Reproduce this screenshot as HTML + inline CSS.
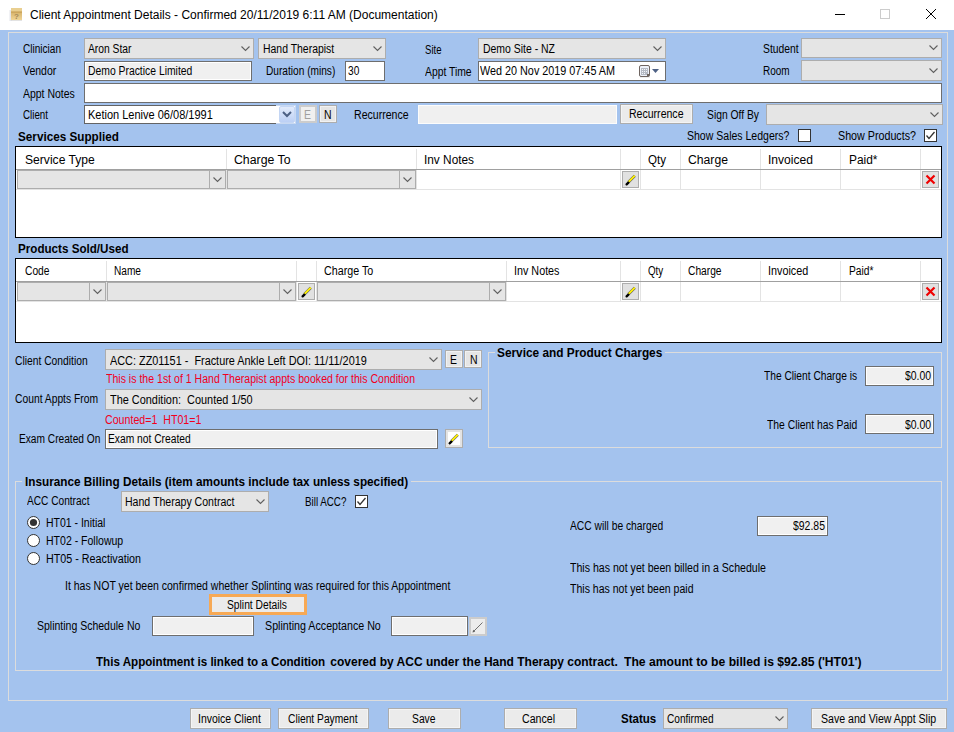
<!DOCTYPE html>
<html><head><meta charset="utf-8"><style>
html,body{margin:0;padding:0;width:954px;height:732px;overflow:hidden;background:#A4C3EE}
.a{position:absolute}
.t{white-space:pre;font-family:'Liberation Sans', sans-serif}
svg{overflow:visible}
</style></head><body>
<div class="a" style="left:0px;top:0px;width:954px;height:30px;background:#fff;"></div>
<div class="a" style="left:0px;top:30px;width:954px;height:702px;background:#A4C3EE;"></div>
<svg class="a" style="left:8px;top:6px" width="18" height="18"><defs><linearGradient id="gb" x1="0" y1="0" x2="0" y2="1"><stop offset="0" stop-color="#C9A155"/><stop offset="1" stop-color="#F0D597"/></linearGradient></defs><rect x="1.5" y="4" width="2" height="11" fill="#D8DCE4" opacity="0.7"/><rect x="3" y="2" width="11" height="12" fill="url(#gb)"/><rect x="3" y="2" width="11" height="4" fill="#E9CF90"/><rect x="3" y="5.5" width="11" height="1" fill="#C49A4E"/><text x="6" y="13" font-size="8" font-weight="bold" fill="#A48A58" font-family="Liberation Sans">?</text><rect x="3" y="14" width="11" height="1" fill="#D0D0D0" opacity="0.6"/></svg>
<div class="a t" style="top:9.00px;font-size:12px;line-height:13px;color:#000;left:30.00px;">Client Appointment Details - Confirmed 20/11/2019 6:11 AM (Documentation)</div>
<div class="a" style="left:835px;top:14px;width:10px;height:1px;background:#000;"></div>
<div class="a" style="left:880px;top:9px;width:10px;height:10px;border:1px solid #CCCCCC;box-sizing:border-box;"></div>
<svg class="a" style="left:926px;top:9px" width="10" height="10"><path d="M0 0 L10 10 M10 0 L0 10" stroke="#000" stroke-width="1"/></svg>
<div class="a" style="left:8px;top:32px;width:940px;height:669px;box-sizing:border-box;border:1px solid #DCDCDC"></div>
<div class="a t" style="top:43.00px;font-size:12px;line-height:13px;color:#000;left:23.00px;transform:scaleX(0.8379);transform-origin:0 0;">Clinician</div>
<div class="a" style="left:84px;top:38px;width:170px;height:21px;background:#E5E5E5;border:1px solid #ADADAD;box-sizing:border-box;"></div>
<svg class="a" style="left:241px;top:46px" width="9" height="5"><polyline points="0.5,0.5 4.5,4.5 8.5,0.5" fill="none" stroke="#606060" stroke-width="1.1"/></svg>
<div class="a t" style="top:43.00px;font-size:12px;line-height:13px;color:#000;left:88.00px;transform:scaleX(0.8582);transform-origin:0 0;">Aron Star</div>
<div class="a" style="left:258px;top:38px;width:128px;height:21px;background:#E5E5E5;border:1px solid #ADADAD;box-sizing:border-box;"></div>
<svg class="a" style="left:373px;top:46px" width="9" height="5"><polyline points="0.5,0.5 4.5,4.5 8.5,0.5" fill="none" stroke="#606060" stroke-width="1.1"/></svg>
<div class="a t" style="top:43.00px;font-size:12px;line-height:13px;color:#000;left:262.60px;transform:scaleX(0.8703);transform-origin:0 0;">Hand Therapist</div>
<div class="a t" style="top:44.00px;font-size:12px;line-height:13px;color:#000;left:424.50px;transform:scaleX(0.7980);transform-origin:0 0;">Site</div>
<div class="a" style="left:478px;top:38px;width:188px;height:21px;background:#E5E5E5;border:1px solid #ADADAD;box-sizing:border-box;"></div>
<svg class="a" style="left:653px;top:46px" width="9" height="5"><polyline points="0.5,0.5 4.5,4.5 8.5,0.5" fill="none" stroke="#606060" stroke-width="1.1"/></svg>
<div class="a t" style="top:43.00px;font-size:12px;line-height:13px;color:#000;left:482.70px;transform:scaleX(0.8700);transform-origin:0 0;">Demo Site - NZ</div>
<div class="a t" style="top:43.00px;font-size:12px;line-height:13px;color:#000;left:763.40px;transform:scaleX(0.8606);transform-origin:0 0;">Student</div>
<div class="a" style="left:801px;top:38px;width:141px;height:20px;background:#E5E5E5;border:1px solid #ADADAD;box-sizing:border-box;"></div>
<svg class="a" style="left:929px;top:45px" width="9" height="5"><polyline points="0.5,0.5 4.5,4.5 8.5,0.5" fill="none" stroke="#606060" stroke-width="1.1"/></svg>
<div class="a t" style="top:65.00px;font-size:12px;line-height:13px;color:#000;left:23.30px;transform:scaleX(0.8729);transform-origin:0 0;">Vendor</div>
<div class="a" style="left:84px;top:61px;width:168px;height:20px;box-sizing:border-box;border:1px solid #6E6E6E;background:#F0F0F0;box-shadow:inset 0 0 0 1px #fff"></div>
<div class="a t" style="top:65.00px;font-size:12px;line-height:13px;color:#000;left:87.70px;transform:scaleX(0.8641);transform-origin:0 0;">Demo Practice Limited</div>
<div class="a t" style="top:65.00px;font-size:12px;line-height:13px;color:#000;left:265.70px;transform:scaleX(0.8449);transform-origin:0 0;">Duration (mins)</div>
<div class="a" style="left:345px;top:61px;width:40px;height:20px;box-sizing:border-box;border:1px solid #6E6E6E;background:#fff;box-shadow:inset 0 0 0 1px #fff"></div>
<div class="a t" style="top:65.00px;font-size:12px;line-height:13px;color:#000;left:348.40px;transform:scaleX(0.8466);transform-origin:0 0;">30</div>
<div class="a t" style="top:66.00px;font-size:12px;line-height:13px;color:#000;left:424.50px;transform:scaleX(0.8628);transform-origin:0 0;">Appt Time</div>
<div class="a" style="left:478px;top:61px;width:188px;height:20px;box-sizing:border-box;border:1px solid #6E6E6E;background:#fff;box-shadow:inset 0 0 0 1px #fff"></div>
<div class="a t" style="top:65.00px;font-size:12px;line-height:13px;color:#000;left:480.40px;transform:scaleX(0.9008);transform-origin:0 0;">Wed 20 Nov 2019 07:45 AM</div>
<svg class="a" style="left:639px;top:65px" width="22" height="13"><rect x="1" y="11" width="10" height="1.5" fill="#E0E0E0"/><rect x="0.5" y="0.5" width="10" height="11" rx="1.5" fill="#EEF2FA" stroke="#6E6460"/><rect x="2" y="3" width="7" height="7" fill="#B5BAC4"/><g fill="#F4F6FA"><rect x="3" y="4" width="1" height="1"/><rect x="5" y="4" width="1" height="1"/><rect x="7" y="4" width="1" height="1"/><rect x="3" y="6" width="1" height="1"/><rect x="5" y="6" width="1" height="1"/><rect x="7" y="6" width="1" height="1"/><rect x="3" y="8" width="1" height="1"/><rect x="5" y="8" width="1" height="1"/></g><rect x="8" y="9" width="2" height="2" fill="#6E6460"/><polygon points="13,4 20,4 16.5,8" fill="#4D6185"/></svg>
<div class="a t" style="top:65.00px;font-size:12px;line-height:13px;color:#000;left:763.40px;transform:scaleX(0.8310);transform-origin:0 0;">Room</div>
<div class="a" style="left:801px;top:60px;width:141px;height:21px;background:#E5E5E5;border:1px solid #ADADAD;box-sizing:border-box;"></div>
<svg class="a" style="left:929px;top:68px" width="9" height="5"><polyline points="0.5,0.5 4.5,4.5 8.5,0.5" fill="none" stroke="#606060" stroke-width="1.1"/></svg>
<div class="a t" style="top:88.00px;font-size:12px;line-height:13px;color:#000;left:23.30px;transform:scaleX(0.8709);transform-origin:0 0;">Appt Notes</div>
<div class="a" style="left:84px;top:83px;width:858px;height:20px;box-sizing:border-box;border:1px solid #6E6E6E;background:#fff;box-shadow:inset 0 0 0 1px #fff"></div>
<div class="a t" style="top:109.00px;font-size:12px;line-height:13px;color:#000;left:23.00px;transform:scaleX(0.8149);transform-origin:0 0;">Client</div>
<div class="a" style="left:84px;top:105px;width:212px;height:19px;box-sizing:border-box;border:1px solid #C9D9F1;background:#fff"></div>
<div class="a" style="left:84px;top:105px;width:192px;height:1px;background:#646464;"></div>
<div class="a" style="left:84px;top:123px;width:192px;height:1px;background:#646464;"></div>
<div class="a" style="left:84px;top:105px;width:1px;height:19px;background:#646464;"></div>
<div class="a" style="left:279px;top:106px;width:16px;height:17px;box-sizing:border-box;border:1px solid #C4D6F4;border-radius:2px;background:linear-gradient(#E2EBFB,#BCD0F5)"></div>
<svg class="a" style="left:282px;top:111px" width="10" height="7"><polyline points="1,1 5,5 9,1" fill="none" stroke="#4D6185" stroke-width="2"/></svg>
<div class="a t" style="top:109.00px;font-size:12px;line-height:13px;color:#000;left:87.70px;transform:scaleX(0.9169);transform-origin:0 0;">Ketion Lenive 06/08/1991</div>
<div class="a" style="left:299px;top:105px;width:18px;height:18px;box-sizing:border-box;border:2px solid #CCCCCC;background:#F0F0F0"></div>
<div class="a t" style="top:109.00px;font-size:12px;line-height:13px;color:#A0A0A0;left:304.00px;transform:scaleX(0.8700);transform-origin:0 0;">E</div>
<div class="a" style="left:319px;top:105px;width:18px;height:18px;box-sizing:border-box;border:1px solid #ADADAD;background:#E5E5E5;box-shadow:inset 0 0 0 1px #F2F2F2"></div>
<div class="a t" style="top:109.00px;font-size:12px;line-height:13px;color:#000;left:324.00px;transform:scaleX(0.8700);transform-origin:0 0;">N</div>
<div class="a t" style="top:109.00px;font-size:12px;line-height:13px;color:#000;left:354.40px;transform:scaleX(0.8803);transform-origin:0 0;">Recurrence</div>
<div class="a" style="left:418px;top:105px;width:199px;height:19px;box-sizing:border-box;border:1px solid #FCFCFC;background:#F0F0F0"></div>
<div class="a" style="left:620px;top:104px;width:73px;height:20px;box-sizing:border-box;border:1px solid #ADADAD;background:#EBEBEB;box-shadow:inset 0 0 0 1px #F4F4F4"></div>
<div class="a t" style="top:108.00px;font-size:12px;line-height:13px;color:#000;left:628.50px;transform:scaleX(0.8786);transform-origin:0 0;">Recurrence</div>
<div class="a t" style="top:109.00px;font-size:12px;line-height:13px;color:#000;left:707.00px;transform:scaleX(0.8599);transform-origin:0 0;">Sign Off By</div>
<div class="a" style="left:766px;top:104px;width:177px;height:21px;background:#E5E5E5;border:1px solid #ADADAD;box-sizing:border-box;"></div>
<svg class="a" style="left:930px;top:112px" width="9" height="5"><polyline points="0.5,0.5 4.5,4.5 8.5,0.5" fill="none" stroke="#606060" stroke-width="1.1"/></svg>
<div class="a t" style="top:131.00px;font-size:12px;line-height:13px;color:#000;font-weight:bold;left:17.50px;transform:scaleX(0.9760);transform-origin:0 0;">Services Supplied</div>
<div class="a t" style="top:130.00px;font-size:12px;line-height:13px;color:#000;left:687.20px;transform:scaleX(0.8771);transform-origin:0 0;">Show Sales Ledgers?</div>
<div class="a" style="left:798px;top:129px;width:13px;height:13px;background:#fff;border:1px solid #333;box-sizing:border-box;"></div>
<div class="a t" style="top:130.00px;font-size:12px;line-height:13px;color:#000;left:838.00px;transform:scaleX(0.8926);transform-origin:0 0;">Show Products?</div>
<div class="a" style="left:924px;top:129px;width:13px;height:13px;background:#fff;border:1px solid #333;box-sizing:border-box;"></div>
<svg class="a" style="left:924px;top:129px" width="13" height="13"><polyline points="2.5,6.5 5,9.5 10.5,3" fill="none" stroke="#333" stroke-width="1.3"/></svg>
<div class="a" style="left:15px;top:146px;width:927px;height:92px;box-sizing:border-box;border:1px solid #000;background:#fff"></div>
<div class="a" style="left:16px;top:169px;width:925px;height:1px;background:#A0A0A0;"></div>
<div class="a" style="left:226px;top:149px;width:1px;height:20px;background:#E3E3E3;"></div>
<div class="a" style="left:416px;top:149px;width:1px;height:20px;background:#E3E3E3;"></div>
<div class="a" style="left:620px;top:149px;width:1px;height:20px;background:#E3E3E3;"></div>
<div class="a" style="left:640px;top:149px;width:1px;height:20px;background:#E3E3E3;"></div>
<div class="a" style="left:680px;top:149px;width:1px;height:20px;background:#E3E3E3;"></div>
<div class="a" style="left:760px;top:149px;width:1px;height:20px;background:#E3E3E3;"></div>
<div class="a" style="left:840px;top:149px;width:1px;height:20px;background:#E3E3E3;"></div>
<div class="a" style="left:920px;top:149px;width:1px;height:20px;background:#E3E3E3;"></div>
<div class="a" style="left:16px;top:189px;width:925px;height:1px;background:#E3E3E3;"></div>
<div class="a" style="left:226px;top:170px;width:1px;height:19px;background:#E3E3E3;"></div>
<div class="a" style="left:416px;top:170px;width:1px;height:19px;background:#E3E3E3;"></div>
<div class="a" style="left:620px;top:170px;width:1px;height:19px;background:#E3E3E3;"></div>
<div class="a" style="left:640px;top:170px;width:1px;height:19px;background:#E3E3E3;"></div>
<div class="a" style="left:680px;top:170px;width:1px;height:19px;background:#E3E3E3;"></div>
<div class="a" style="left:760px;top:170px;width:1px;height:19px;background:#E3E3E3;"></div>
<div class="a" style="left:840px;top:170px;width:1px;height:19px;background:#E3E3E3;"></div>
<div class="a" style="left:920px;top:170px;width:1px;height:19px;background:#E3E3E3;"></div>
<div class="a t" style="top:154.00px;font-size:12px;line-height:13px;color:#000;left:25.00px;transform:scaleX(1.0092);transform-origin:0 0;">Service Type</div>
<div class="a t" style="top:154.00px;font-size:12px;line-height:13px;color:#000;left:234.00px;transform:scaleX(1.0241);transform-origin:0 0;">Charge To</div>
<div class="a t" style="top:154.00px;font-size:12px;line-height:13px;color:#000;left:424.00px;transform:scaleX(0.9864);transform-origin:0 0;">Inv Notes</div>
<div class="a t" style="top:154.00px;font-size:12px;line-height:13px;color:#000;left:648.00px;transform:scaleX(0.9642);transform-origin:0 0;">Qty</div>
<div class="a t" style="top:154.00px;font-size:12px;line-height:13px;color:#000;left:688.00px;transform:scaleX(1.0163);transform-origin:0 0;">Charge</div>
<div class="a t" style="top:154.00px;font-size:12px;line-height:13px;color:#000;left:768.00px;transform:scaleX(1.0068);transform-origin:0 0;">Invoiced</div>
<div class="a t" style="top:154.00px;font-size:12px;line-height:13px;color:#000;left:848.50px;transform:scaleX(0.9935);transform-origin:0 0;">Paid*</div>
<div class="a" style="left:17px;top:170px;width:209px;height:19px;background:#E5E5E5;border:1px solid #ADADAD;box-sizing:border-box;"></div>
<svg class="a" style="left:213px;top:177px" width="9" height="5"><polyline points="0.5,0.5 4.5,4.5 8.5,0.5" fill="none" stroke="#606060" stroke-width="1.1"/></svg>
<div class="a" style="left:209px;top:170px;width:1px;height:19px;background:#ADADAD;"></div>
<div class="a" style="left:227px;top:170px;width:189px;height:19px;background:#E5E5E5;border:1px solid #ADADAD;box-sizing:border-box;"></div>
<svg class="a" style="left:403px;top:177px" width="9" height="5"><polyline points="0.5,0.5 4.5,4.5 8.5,0.5" fill="none" stroke="#606060" stroke-width="1.1"/></svg>
<div class="a" style="left:399px;top:170px;width:1px;height:19px;background:#ADADAD;"></div>
<div class="a" style="left:622px;top:171px;width:17px;height:17px;background:#E1E1E1;border:1px solid #ADADAD;box-sizing:border-box;"></div>
<svg class="a" style="left:622px;top:171px" width="17" height="17"><line x1="6.3" y1="11.2" x2="12.8" y2="4.7" stroke="#303048" stroke-width="2.8" stroke-opacity="0.75"/><line x1="6.3" y1="11.2" x2="12.8" y2="4.7" stroke="#FFF200" stroke-width="1.9"/><line x1="4.6" y1="13.4" x2="6.4" y2="11.6" stroke="#000" stroke-width="2.3" stroke-linecap="round"/></svg>
<div class="a" style="left:922px;top:171px;width:17px;height:17px;background:#E1E1E1;border:1px solid #ADADAD;box-sizing:border-box;"></div>
<svg class="a" style="left:922px;top:171px" width="17" height="17"><path d="M4.5 4.5 L12.5 12.5 M12.5 4.5 L4.5 12.5" stroke="#F00000" stroke-width="2.2"/></svg>
<div class="a t" style="top:243.00px;font-size:12px;line-height:13px;color:#000;font-weight:bold;left:17.50px;transform:scaleX(0.9691);transform-origin:0 0;">Products Sold/Used</div>
<div class="a" style="left:15px;top:258px;width:927px;height:85px;box-sizing:border-box;border:1px solid #000;background:#fff"></div>
<div class="a" style="left:16px;top:281px;width:925px;height:1px;background:#A0A0A0;"></div>
<div class="a" style="left:106px;top:261px;width:1px;height:20px;background:#E3E3E3;"></div>
<div class="a" style="left:296px;top:261px;width:1px;height:20px;background:#E3E3E3;"></div>
<div class="a" style="left:316px;top:261px;width:1px;height:20px;background:#E3E3E3;"></div>
<div class="a" style="left:506px;top:261px;width:1px;height:20px;background:#E3E3E3;"></div>
<div class="a" style="left:620px;top:261px;width:1px;height:20px;background:#E3E3E3;"></div>
<div class="a" style="left:640px;top:261px;width:1px;height:20px;background:#E3E3E3;"></div>
<div class="a" style="left:680px;top:261px;width:1px;height:20px;background:#E3E3E3;"></div>
<div class="a" style="left:760px;top:261px;width:1px;height:20px;background:#E3E3E3;"></div>
<div class="a" style="left:840px;top:261px;width:1px;height:20px;background:#E3E3E3;"></div>
<div class="a" style="left:920px;top:261px;width:1px;height:20px;background:#E3E3E3;"></div>
<div class="a" style="left:16px;top:301px;width:925px;height:1px;background:#E3E3E3;"></div>
<div class="a" style="left:106px;top:282px;width:1px;height:19px;background:#E3E3E3;"></div>
<div class="a" style="left:296px;top:282px;width:1px;height:19px;background:#E3E3E3;"></div>
<div class="a" style="left:316px;top:282px;width:1px;height:19px;background:#E3E3E3;"></div>
<div class="a" style="left:506px;top:282px;width:1px;height:19px;background:#E3E3E3;"></div>
<div class="a" style="left:620px;top:282px;width:1px;height:19px;background:#E3E3E3;"></div>
<div class="a" style="left:640px;top:282px;width:1px;height:19px;background:#E3E3E3;"></div>
<div class="a" style="left:680px;top:282px;width:1px;height:19px;background:#E3E3E3;"></div>
<div class="a" style="left:760px;top:282px;width:1px;height:19px;background:#E3E3E3;"></div>
<div class="a" style="left:840px;top:282px;width:1px;height:19px;background:#E3E3E3;"></div>
<div class="a" style="left:920px;top:282px;width:1px;height:19px;background:#E3E3E3;"></div>
<div class="a t" style="top:265.00px;font-size:12px;line-height:13px;color:#000;left:24.50px;transform:scaleX(0.8540);transform-origin:0 0;">Code</div>
<div class="a t" style="top:265.00px;font-size:12px;line-height:13px;color:#000;left:114.00px;transform:scaleX(0.8435);transform-origin:0 0;">Name</div>
<div class="a t" style="top:265.00px;font-size:12px;line-height:13px;color:#000;left:323.60px;transform:scaleX(0.8923);transform-origin:0 0;">Charge To</div>
<div class="a t" style="top:265.00px;font-size:12px;line-height:13px;color:#000;left:514.00px;transform:scaleX(0.8976);transform-origin:0 0;">Inv Notes</div>
<div class="a t" style="top:265.00px;font-size:12px;line-height:13px;color:#000;left:648.00px;transform:scaleX(0.8142);transform-origin:0 0;">Qty</div>
<div class="a t" style="top:265.00px;font-size:12px;line-height:13px;color:#000;left:687.50px;transform:scaleX(0.8512);transform-origin:0 0;">Charge</div>
<div class="a t" style="top:265.00px;font-size:12px;line-height:13px;color:#000;left:768.00px;transform:scaleX(0.8994);transform-origin:0 0;">Invoiced</div>
<div class="a t" style="top:265.00px;font-size:12px;line-height:13px;color:#000;left:848.50px;transform:scaleX(0.8540);transform-origin:0 0;">Paid*</div>
<div class="a" style="left:17px;top:282px;width:89px;height:19px;background:#E5E5E5;border:1px solid #ADADAD;box-sizing:border-box;"></div>
<svg class="a" style="left:93px;top:289px" width="9" height="5"><polyline points="0.5,0.5 4.5,4.5 8.5,0.5" fill="none" stroke="#606060" stroke-width="1.1"/></svg>
<div class="a" style="left:89px;top:282px;width:1px;height:19px;background:#ADADAD;"></div>
<div class="a" style="left:107px;top:282px;width:189px;height:19px;background:#E5E5E5;border:1px solid #ADADAD;box-sizing:border-box;"></div>
<svg class="a" style="left:283px;top:289px" width="9" height="5"><polyline points="0.5,0.5 4.5,4.5 8.5,0.5" fill="none" stroke="#606060" stroke-width="1.1"/></svg>
<div class="a" style="left:279px;top:282px;width:1px;height:19px;background:#ADADAD;"></div>
<div class="a" style="left:298px;top:283px;width:17px;height:17px;background:#E1E1E1;border:1px solid #ADADAD;box-sizing:border-box;"></div>
<svg class="a" style="left:298px;top:283px" width="17" height="17"><line x1="6.3" y1="11.2" x2="12.8" y2="4.7" stroke="#303048" stroke-width="2.8" stroke-opacity="0.75"/><line x1="6.3" y1="11.2" x2="12.8" y2="4.7" stroke="#FFF200" stroke-width="1.9"/><line x1="4.6" y1="13.4" x2="6.4" y2="11.6" stroke="#000" stroke-width="2.3" stroke-linecap="round"/></svg>
<div class="a" style="left:317px;top:282px;width:189px;height:19px;background:#E5E5E5;border:1px solid #ADADAD;box-sizing:border-box;"></div>
<svg class="a" style="left:493px;top:289px" width="9" height="5"><polyline points="0.5,0.5 4.5,4.5 8.5,0.5" fill="none" stroke="#606060" stroke-width="1.1"/></svg>
<div class="a" style="left:489px;top:282px;width:1px;height:19px;background:#ADADAD;"></div>
<div class="a" style="left:622px;top:283px;width:17px;height:17px;background:#E1E1E1;border:1px solid #ADADAD;box-sizing:border-box;"></div>
<svg class="a" style="left:622px;top:283px" width="17" height="17"><line x1="6.3" y1="11.2" x2="12.8" y2="4.7" stroke="#303048" stroke-width="2.8" stroke-opacity="0.75"/><line x1="6.3" y1="11.2" x2="12.8" y2="4.7" stroke="#FFF200" stroke-width="1.9"/><line x1="4.6" y1="13.4" x2="6.4" y2="11.6" stroke="#000" stroke-width="2.3" stroke-linecap="round"/></svg>
<div class="a" style="left:922px;top:283px;width:17px;height:17px;background:#E1E1E1;border:1px solid #ADADAD;box-sizing:border-box;"></div>
<svg class="a" style="left:922px;top:283px" width="17" height="17"><path d="M4.5 4.5 L12.5 12.5 M12.5 4.5 L4.5 12.5" stroke="#F00000" stroke-width="2.2"/></svg>
<div class="a t" style="top:355.00px;font-size:12px;line-height:13px;color:#000;left:15.40px;transform:scaleX(0.8570);transform-origin:0 0;">Client Condition</div>
<div class="a" style="left:105px;top:349px;width:337px;height:21px;background:#E5E5E5;border:1px solid #ADADAD;box-sizing:border-box;"></div>
<svg class="a" style="left:429px;top:357px" width="9" height="5"><polyline points="0.5,0.5 4.5,4.5 8.5,0.5" fill="none" stroke="#606060" stroke-width="1.1"/></svg>
<div class="a t" style="top:355.00px;font-size:12px;line-height:13px;color:#000;left:109.60px;transform:scaleX(0.9059);transform-origin:0 0;">ACC: ZZ01151 -  Fracture Ankle Left DOI: 11/11/2019</div>
<div class="a" style="left:445px;top:350px;width:18px;height:18px;box-sizing:border-box;border:1px solid #ADADAD;background:#E5E5E5;box-shadow:inset 0 0 0 1px #F2F2F2"></div>
<div class="a t" style="top:354.00px;font-size:12px;line-height:13px;color:#000;left:450.00px;transform:scaleX(0.8700);transform-origin:0 0;">E</div>
<div class="a" style="left:464px;top:350px;width:18px;height:18px;box-sizing:border-box;border:1px solid #ADADAD;background:#E5E5E5;box-shadow:inset 0 0 0 1px #F2F2F2"></div>
<div class="a t" style="top:354.00px;font-size:12px;line-height:13px;color:#000;left:469.50px;transform:scaleX(0.8700);transform-origin:0 0;">N</div>
<div class="a t" style="top:373.00px;font-size:12px;line-height:13px;color:#F2001E;left:105.80px;transform:scaleX(0.8796);transform-origin:0 0;">This is the 1st of 1 Hand Therapist appts booked for this Condition</div>
<div class="a t" style="top:393.00px;font-size:12px;line-height:13px;color:#000;left:15.40px;transform:scaleX(0.8586);transform-origin:0 0;">Count Appts From</div>
<div class="a" style="left:105px;top:389px;width:377px;height:21px;background:#E5E5E5;border:1px solid #ADADAD;box-sizing:border-box;"></div>
<svg class="a" style="left:469px;top:397px" width="9" height="5"><polyline points="0.5,0.5 4.5,4.5 8.5,0.5" fill="none" stroke="#606060" stroke-width="1.1"/></svg>
<div class="a t" style="top:394.00px;font-size:12px;line-height:13px;color:#000;left:110.40px;transform:scaleX(0.9096);transform-origin:0 0;">The Condition:  Counted 1/50</div>
<div class="a t" style="top:414.00px;font-size:12px;line-height:13px;color:#F2001E;left:104.60px;transform:scaleX(0.8865);transform-origin:0 0;">Counted=1  HT01=1</div>
<div class="a t" style="top:433.00px;font-size:12px;line-height:13px;color:#000;left:18.60px;transform:scaleX(0.8476);transform-origin:0 0;">Exam Created On</div>
<div class="a" style="left:105px;top:429px;width:333px;height:20px;box-sizing:border-box;border:1px solid #6E6E6E;background:#F0F0F0;box-shadow:inset 0 0 0 1px #fff"></div>
<div class="a t" style="top:433.00px;font-size:12px;line-height:13px;color:#000;left:107.80px;transform:scaleX(0.8551);transform-origin:0 0;">Exam not Created</div>
<div class="a" style="left:445px;top:429px;width:18px;height:19px;box-sizing:border-box;border:1px solid #ADADAD;background:#fff;box-shadow:inset 0 0 0 2px #E3E3E3"></div>
<svg class="a" style="left:445px;top:430px" width="17" height="17"><line x1="6.3" y1="11.2" x2="12.8" y2="4.7" stroke="#303048" stroke-width="2.8" stroke-opacity="0.75"/><line x1="6.3" y1="11.2" x2="12.8" y2="4.7" stroke="#FFF200" stroke-width="1.9"/><line x1="4.6" y1="13.4" x2="6.4" y2="11.6" stroke="#000" stroke-width="2.3" stroke-linecap="round"/></svg>
<div class="a" style="left:488px;top:352px;width:454px;height:96px;box-sizing:border-box;border:1px solid #DCDCDC;border-top:none"></div>
<div class="a" style="left:488px;top:352px;width:7px;height:1px;background:#DCDCDC;"></div>
<div class="a" style="left:665px;top:352px;width:277px;height:1px;background:#DCDCDC;"></div>
<div class="a t" style="top:347.00px;font-size:12px;line-height:13px;color:#000;font-weight:bold;left:497.30px;transform:scaleX(0.9875);transform-origin:0 0;">Service and Product Charges</div>
<div class="a t" style="top:370.00px;font-size:12px;line-height:13px;color:#000;left:763.90px;transform:scaleX(0.8511);transform-origin:0 0;">The Client Charge is</div>
<div class="a" style="left:865px;top:366px;width:69px;height:20px;box-sizing:border-box;border:1px solid #6E6E6E;background:#F0F0F0;box-shadow:inset 0 0 0 1px #fff"></div>
<div class="a t" style="top:370.00px;font-size:12px;line-height:13px;color:#000;left:904.57px;transform:scaleX(0.8700);transform-origin:0 0;">$0.00</div>
<div class="a t" style="top:419.00px;font-size:12px;line-height:13px;color:#000;left:766.70px;transform:scaleX(0.8623);transform-origin:0 0;">The Client has Paid</div>
<div class="a" style="left:865px;top:414px;width:69px;height:20px;box-sizing:border-box;border:1px solid #6E6E6E;background:#F0F0F0;box-shadow:inset 0 0 0 1px #fff"></div>
<div class="a t" style="top:419.00px;font-size:12px;line-height:13px;color:#000;left:904.57px;transform:scaleX(0.8700);transform-origin:0 0;">$0.00</div>
<div class="a" style="left:15px;top:481px;width:927px;height:190px;box-sizing:border-box;border:1px solid #DCDCDC;border-top:none"></div>
<div class="a" style="left:15px;top:481px;width:7px;height:1px;background:#DCDCDC;"></div>
<div class="a" style="left:411px;top:481px;width:531px;height:1px;background:#DCDCDC;"></div>
<div class="a t" style="top:476.00px;font-size:12px;line-height:13px;color:#000;font-weight:bold;left:25.10px;transform:scaleX(0.9790);transform-origin:0 0;">Insurance Billing Details (item amounts include tax unless specified)</div>
<div class="a t" style="top:495.00px;font-size:12px;line-height:13px;color:#000;left:27.20px;transform:scaleX(0.8443);transform-origin:0 0;">ACC Contract</div>
<div class="a" style="left:121px;top:491px;width:148px;height:21px;background:#E5E5E5;border:1px solid #ADADAD;box-sizing:border-box;"></div>
<svg class="a" style="left:256px;top:499px" width="9" height="5"><polyline points="0.5,0.5 4.5,4.5 8.5,0.5" fill="none" stroke="#606060" stroke-width="1.1"/></svg>
<div class="a t" style="top:496.00px;font-size:12px;line-height:13px;color:#000;left:125.30px;transform:scaleX(0.8795);transform-origin:0 0;">Hand Therapy Contract</div>
<div class="a t" style="top:496.00px;font-size:12px;line-height:13px;color:#000;left:304.50px;transform:scaleX(0.8160);transform-origin:0 0;">Bill ACC?</div>
<div class="a" style="left:355px;top:495px;width:13px;height:13px;background:#fff;border:1px solid #333;box-sizing:border-box;"></div>
<svg class="a" style="left:355px;top:495px" width="13" height="13"><polyline points="2.5,6.5 5,9.5 10.5,3" fill="none" stroke="#333" stroke-width="1.3"/></svg>
<svg class="a" style="left:27px;top:516px" width="14" height="14"><circle cx="6.5" cy="6.5" r="6" fill="#fff" stroke="#333" stroke-width="1"/><circle cx="6.5" cy="6.5" r="3.6" fill="#333"/></svg>
<div class="a t" style="top:517.00px;font-size:12px;line-height:13px;color:#000;left:46.00px;transform:scaleX(0.8733);transform-origin:0 0;">HT01 - Initial</div>
<svg class="a" style="left:27px;top:534px" width="14" height="14"><circle cx="6.5" cy="6.5" r="6" fill="#fff" stroke="#333" stroke-width="1"/></svg>
<div class="a t" style="top:535.00px;font-size:12px;line-height:13px;color:#000;left:46.00px;transform:scaleX(0.8770);transform-origin:0 0;">HT02 - Followup</div>
<svg class="a" style="left:27px;top:552px" width="14" height="14"><circle cx="6.5" cy="6.5" r="6" fill="#fff" stroke="#333" stroke-width="1"/></svg>
<div class="a t" style="top:553.00px;font-size:12px;line-height:13px;color:#000;left:46.00px;transform:scaleX(0.8959);transform-origin:0 0;">HT05 - Reactivation</div>
<div class="a t" style="top:580.00px;font-size:12px;line-height:13px;color:#000;left:64.60px;transform:scaleX(0.8757);transform-origin:0 0;">It has NOT yet been confirmed whether Splinting was required for this Appointment</div>
<div class="a" style="left:209px;top:594px;width:98px;height:21px;box-sizing:border-box;border:3px solid #F7A955;background:#EBEBEB"></div>
<div class="a t" style="top:599.00px;font-size:12px;line-height:13px;color:#000;left:227.20px;transform:scaleX(0.8568);transform-origin:0 0;">Splint Details</div>
<div class="a t" style="top:620.00px;font-size:12px;line-height:13px;color:#000;left:37.40px;transform:scaleX(0.8748);transform-origin:0 0;">Splinting Schedule No</div>
<div class="a" style="left:152px;top:616px;width:102px;height:20px;box-sizing:border-box;border:1px solid #6E6E6E;background:#F0F0F0;box-shadow:inset 0 0 0 1px #fff"></div>
<div class="a t" style="top:620.00px;font-size:12px;line-height:13px;color:#000;left:265.30px;transform:scaleX(0.8903);transform-origin:0 0;">Splinting Acceptance No</div>
<div class="a" style="left:391px;top:616px;width:77px;height:20px;box-sizing:border-box;border:1px solid #6E6E6E;background:#F0F0F0;box-shadow:inset 0 0 0 1px #fff"></div>
<div class="a" style="left:469px;top:617px;width:18px;height:19px;box-sizing:border-box;border:2px solid #CCCCCC;background:#EDEDED"></div>
<svg class="a" style="left:469px;top:617px" width="18" height="19"><line x1="4.5" y1="14.5" x2="13.5" y2="5.5" stroke="#707070" stroke-width="1"/><path d="M3.5 15.5 L4.2 12.8 L6.2 14.8 Z" fill="#606060"/></svg>
<div class="a t" style="top:520.40px;font-size:12px;line-height:13px;color:#000;left:569.50px;transform:scaleX(0.8564);transform-origin:0 0;">ACC will be charged</div>
<div class="a" style="left:757px;top:516px;width:71px;height:20px;box-sizing:border-box;border:1px solid #6E6E6E;background:#F0F0F0;box-shadow:inset 0 0 0 1px #fff"></div>
<div class="a t" style="top:520.40px;font-size:12px;line-height:13px;color:#000;left:792.57px;transform:scaleX(0.8700);transform-origin:0 0;">$92.85</div>
<div class="a t" style="top:562.00px;font-size:12px;line-height:13px;color:#000;left:569.50px;transform:scaleX(0.8819);transform-origin:0 0;">This has not yet been billed in a Schedule</div>
<div class="a t" style="top:583.30px;font-size:12px;line-height:13px;color:#000;left:569.50px;transform:scaleX(0.8774);transform-origin:0 0;">This has not yet been paid</div>
<div class="a t" style="top:656.00px;font-size:12px;line-height:13px;color:#000;font-weight:bold;left:95.60px;transform:scaleX(0.9675);transform-origin:0 0;">This Appointment is linked to a Condition</div>
<div class="a t" style="top:656.00px;font-size:12px;line-height:13px;color:#000;font-weight:bold;left:330.30px;">covered by ACC under the Hand Therapy contract.</div>
<div class="a t" style="top:656.00px;font-size:12px;line-height:13px;color:#000;font-weight:bold;left:623.50px;transform:scaleX(1.0131);transform-origin:0 0;">The amount to be billed is $92.85 ('HT01')</div>
<div class="a" style="left:190px;top:708px;width:81px;height:21px;box-sizing:border-box;border:1px solid #ADADAD;background:#EBEBEB;box-shadow:inset 0 0 0 1px #F4F4F4"></div>
<div class="a t" style="top:713.00px;font-size:12px;line-height:13px;color:#000;left:198.20px;transform:scaleX(0.8718);transform-origin:0 0;">Invoice Client</div>
<div class="a" style="left:278px;top:708px;width:91px;height:21px;box-sizing:border-box;border:1px solid #ADADAD;background:#EBEBEB;box-shadow:inset 0 0 0 1px #F4F4F4"></div>
<div class="a t" style="top:713.00px;font-size:12px;line-height:13px;color:#000;left:287.50px;transform:scaleX(0.8541);transform-origin:0 0;">Client Payment</div>
<div class="a" style="left:388px;top:708px;width:73px;height:21px;box-sizing:border-box;border:1px solid #ADADAD;background:#EBEBEB;box-shadow:inset 0 0 0 1px #F4F4F4"></div>
<div class="a t" style="top:713.00px;font-size:12px;line-height:13px;color:#000;left:411.80px;transform:scaleX(0.8592);transform-origin:0 0;">Save</div>
<div class="a" style="left:504px;top:708px;width:73px;height:21px;box-sizing:border-box;border:1px solid #ADADAD;background:#EBEBEB;box-shadow:inset 0 0 0 1px #F4F4F4"></div>
<div class="a t" style="top:713.00px;font-size:12px;line-height:13px;color:#000;left:522.40px;transform:scaleX(0.8835);transform-origin:0 0;">Cancel</div>
<div class="a t" style="top:713.00px;font-size:12px;line-height:13px;color:#000;font-weight:bold;left:620.50px;transform:scaleX(0.9598);transform-origin:0 0;">Status</div>
<div class="a" style="left:663px;top:708px;width:125px;height:21px;background:#E5E5E5;border:1px solid #ADADAD;box-sizing:border-box;"></div>
<svg class="a" style="left:775px;top:716px" width="9" height="5"><polyline points="0.5,0.5 4.5,4.5 8.5,0.5" fill="none" stroke="#606060" stroke-width="1.1"/></svg>
<div class="a t" style="top:713.00px;font-size:12px;line-height:13px;color:#000;left:666.70px;transform:scaleX(0.8419);transform-origin:0 0;">Confirmed</div>
<div class="a" style="left:811px;top:708px;width:136px;height:21px;box-sizing:border-box;border:1px solid #ADADAD;background:#EBEBEB;box-shadow:inset 0 0 0 1px #F4F4F4"></div>
<div class="a t" style="top:713.00px;font-size:12px;line-height:13px;color:#000;left:820.50px;transform:scaleX(0.8826);transform-origin:0 0;">Save and View Appt Slip</div>
</body></html>
